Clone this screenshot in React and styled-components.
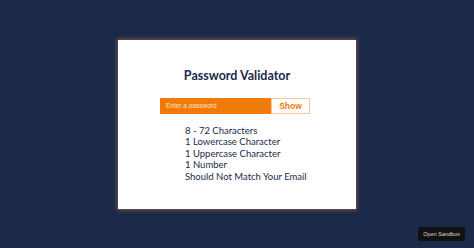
import React, { useState } from "react";
import styled, { createGlobalStyle } from "styled-components";

const GlobalStyle = createGlobalStyle`
  html, body, #root {
    margin: 0;
    height: 100%;
  }
  body {
    background-color: #1b2a4b;
    font-family: Lato, "Liberation Sans", sans-serif;
  }
`;

const Page = styled.div`
  height: 100%;
  display: flex;
  align-items: center;
  justify-content: center;
`;

const Card = styled.div`
  width: 238px;
  height: 169px;
  box-sizing: border-box;
  background-color: #ffffff;
  box-shadow: 0 0 4px 1px rgba(214, 120, 60, 0.55);
  display: flex;
  flex-direction: column;
  align-items: center;
  padding-top: 28px;
`;

const Title = styled.h1`
  margin: 0;
  font-size: 12.5px;
  line-height: 16px;
  font-weight: 700;
  color: #1b2a4b;
`;

const Row = styled.div`
  display: flex;
  margin-top: 14px;
  margin-right: 4px;
`;

const Input = styled.input`
  width: 111px;
  height: 16px;
  box-sizing: border-box;
  border: none;
  outline: none;
  background-color: #f07a0a;
  color: #fff;
  padding: 0 6px;
  font-family: "Liberation Sans", Arial, sans-serif;
  font-size: 6.5px;
  &::placeholder {
    color: #ffe6d0;
  }
`;

const ShowButton = styled.button`
  width: 39px;
  height: 16px;
  box-sizing: border-box;
  border: 1px solid #f5c9a0;
  background: #fff;
  color: #f07a0a;
  font-family: "Liberation Sans", Arial, sans-serif;
  font-weight: 700;
  font-size: 8.5px;
  padding: 0;
`;

const Rules = styled.ul`
  list-style: none;
  margin: 11px 0 0 67px;
  padding: 0;
  align-self: stretch;
`;

const Rule = styled.li`
  font-size: 9.5px;
  line-height: 11.5px;
  color: #1b2a4b;
`;

const Sandbox = styled.div`
  position: fixed;
  right: 9px;
  bottom: 7px;
  background: #111;
  color: #ddd;
  font-family: "Liberation Sans", Arial, sans-serif;
  font-size: 5.5px;
  padding: 4px 5px;
  border-radius: 2px;
`;

const rules = [
  "8 - 72 Characters",
  "1 Lowercase Character",
  "1 Uppercase Character",
  "1 Number",
  "Should Not Match Your Email",
];

export default function App() {
  const [show, setShow] = useState(false);
  return (
    <>
      <GlobalStyle />
      <Page>
        <Card>
          <Title>Password Validator</Title>
          <Row>
            <Input
              type={show ? "text" : "password"}
              placeholder="Enter a password"
            />
            <ShowButton onClick={() => setShow(!show)}>
              {show ? "Hide" : "Show"}
            </ShowButton>
          </Row>
          <Rules>
            {rules.map((r) => (
              <Rule key={r}>{r}</Rule>
            ))}
          </Rules>
        </Card>
      </Page>
      <Sandbox>Open Sandbox</Sandbox>
    </>
  );
}
